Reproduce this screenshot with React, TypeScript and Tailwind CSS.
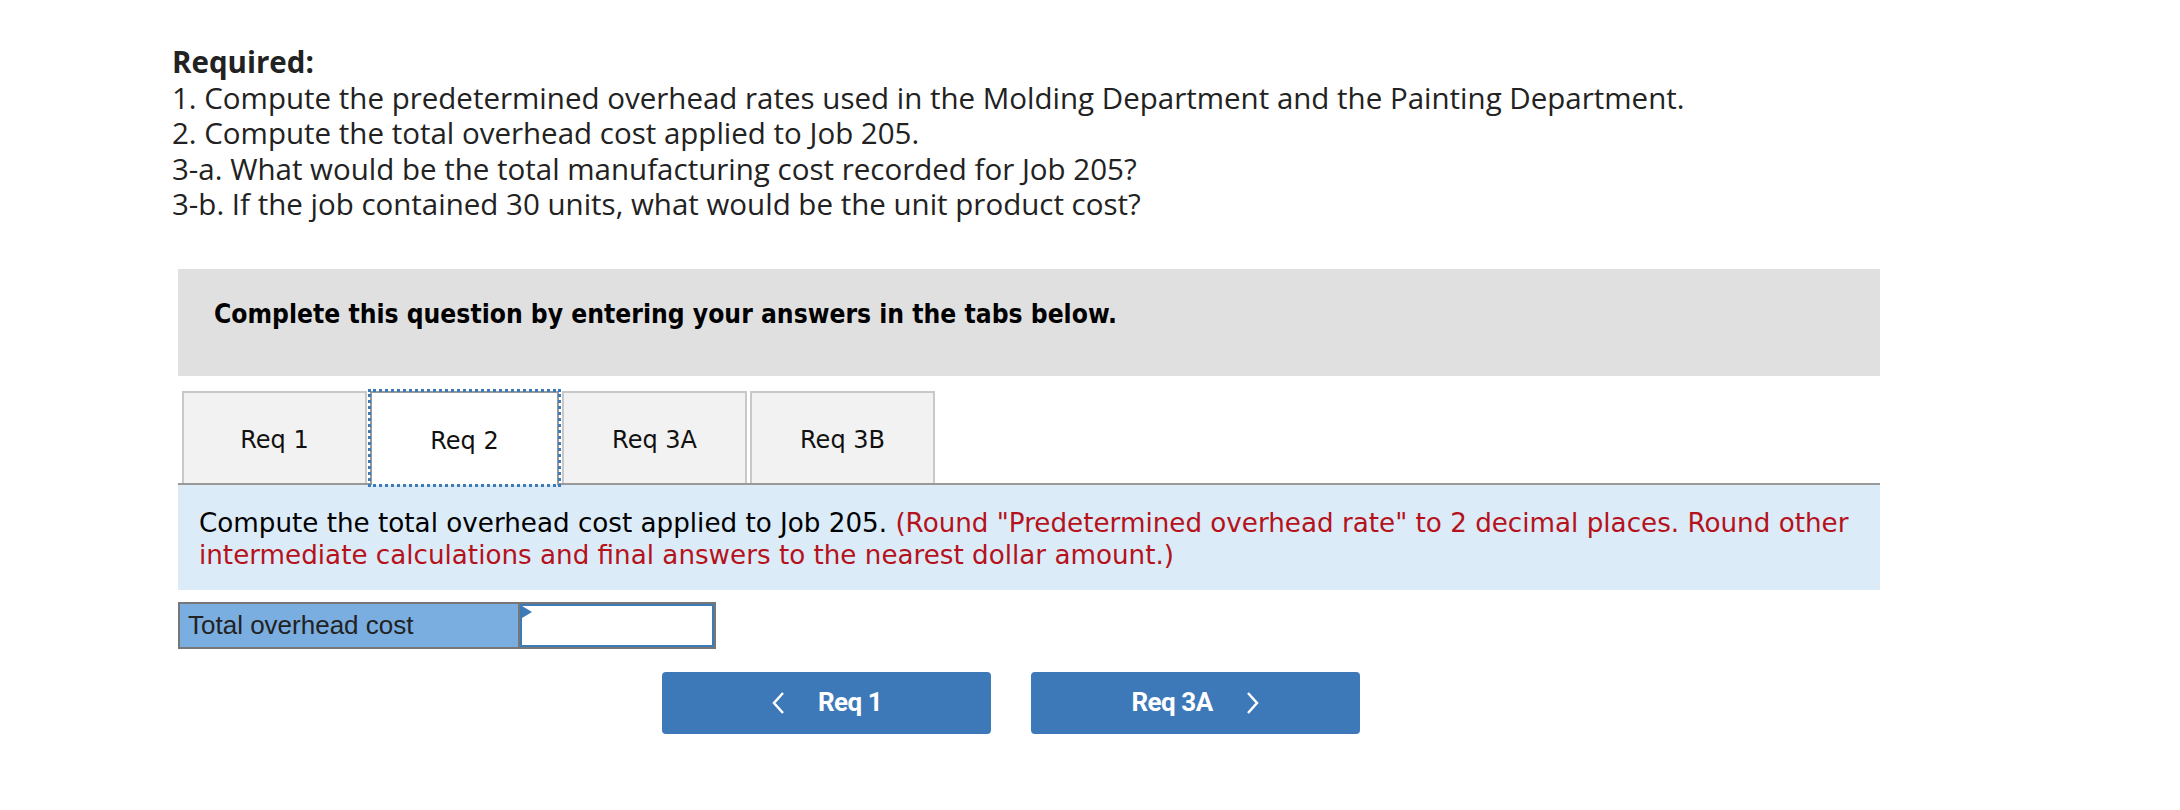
import React from "react";

const tabs = ["Req 1", "Req 2", "Req 3A", "Req 3B"];

export default function App() {
  const active = 1;

  return (
    <div className="min-h-[810px] w-[2180px] bg-white pl-[178px] pt-[44px]">
      {/* Required list */}
      <div className="-ml-[6px] text-[#222] [font-family:'Open_Sans',Lato,sans-serif] text-[29.5px] leading-[35.5px]">
        <div className="font-bold">Required:</div>
        <div>1. Compute the predetermined overhead rates used in the Molding Department and the Painting Department.</div>
        <div>2. Compute the total overhead cost applied to Job 205.</div>
        <div>3-a. What would be the total manufacturing cost recorded for Job 205?</div>
        <div>3-b. If the job contained 30 units, what would be the unit product cost?</div>
      </div>

      <div className="w-[1702px] mt-[47px]">
        {/* Instruction bar */}
        <div className="h-[107px] bg-[#e0e0e0] pl-[36px] pt-[29px] [font-family:'DejaVu_Sans_Condensed','DejaVu_Sans',sans-serif] font-bold text-[26.2px] leading-[32px] text-black">
          Complete this question by entering your answers in the tabs below.
        </div>

        {/* Tabs */}
        <div className="mt-[15px] flex gap-[3px] pl-[4px] border-b-2 border-[#999] [font-family:'DejaVu_Sans',sans-serif] text-[24px] text-[#111]">
          {tabs.map((t, i) =>
            i === active ? (
              <div
                key={t}
                className="w-[189px] h-[94px] -mb-[2px] pt-[4px] bg-white border-2 border-[#999] border-b-0 outline-[3px] outline-dotted outline-[#3d7ab8] -outline-offset-[1px] flex items-center justify-center"
              >
                {t}
              </div>
            ) : (
              <div
                key={t}
                className="w-[185px] h-[92px] pt-[4px] bg-[#f2f2f2] border-2 border-[#c8c8c8] border-b-0 flex items-center justify-center"
              >
                {t}
              </div>
            )
          )}
        </div>

        {/* Prompt */}
        <div className="bg-[#dbebf8] pl-[21px] pr-[8px] pt-[22px] pb-[19px] [font-family:'DejaVu_Sans',sans-serif] text-[26.2px] leading-[32px] text-black">
          Compute the total overhead cost applied to Job 205.{" "}
          <span className="text-[#b5121b]">
            (Round "Predetermined overhead rate" to 2 decimal places. Round other intermediate calculations and final answers to the nearest dollar amount.)
          </span>
        </div>

        {/* Answer row */}
        <div className="mt-[12px] flex h-[47px] w-[538px] border-2 border-[#777] [font-family:'Liberation_Sans',Arial,sans-serif]">
          <div className="w-[340px] bg-[#7aaee0] border-r-2 border-[#777] flex items-center pl-[8px] text-[26px] text-[#222]">
            Total overhead cost
          </div>
          <div className="relative flex-1 bg-white border-2 border-[#3d7ab8]">
            <div className="absolute left-0 top-0 w-0 h-0 border-t-[6px] border-b-[6px] border-l-[10px] border-t-transparent border-b-transparent border-l-[#3d7ab8]" />
          </div>
        </div>

        {/* Nav buttons */}
        <div className="mt-[23px] flex gap-[40px] pl-[484px] [font-family:Roboto,sans-serif]">
          <button className="w-[329px] h-[62px] rounded-[4px] bg-[#3d79b8] text-white font-bold text-[26px] flex items-center justify-center gap-[33px]">
            <svg width="14" height="24" viewBox="0 0 14 24" fill="none" stroke="white" strokeWidth="2.5">
              <path d="M12 2 L3 12 L12 22" />
            </svg>
            <span className="tracking-[-0.5px]">Req 1</span>
          </button>
          <button className="w-[329px] h-[62px] rounded-[4px] bg-[#3d79b8] text-white font-bold text-[26px] flex items-center justify-center gap-[33px]">
            <span className="tracking-[-0.5px]">Req 3A</span>
            <svg width="14" height="24" viewBox="0 0 14 24" fill="none" stroke="white" strokeWidth="2.5">
              <path d="M2 2 L11 12 L2 22" />
            </svg>
          </button>
        </div>
      </div>
    </div>
  );
}
